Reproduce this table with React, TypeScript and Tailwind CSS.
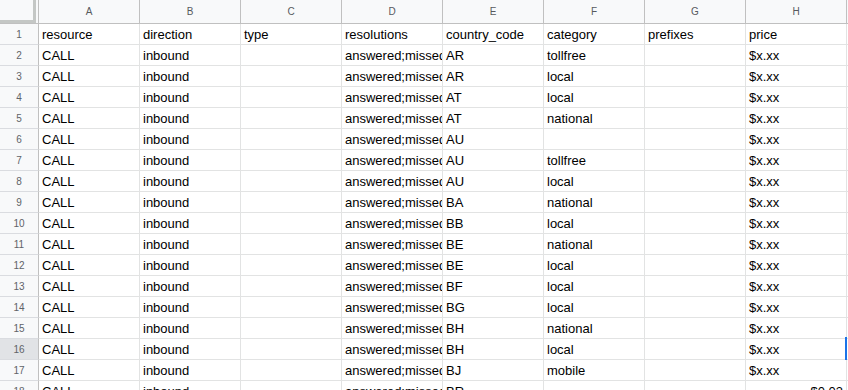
import React from "react";

const COLS = ["A", "B", "C", "D", "E", "F", "G", "H"];

const RES = "answered;missed;voicemail";

const ROWS: string[][] = [
  ["resource", "direction", "type", "resolutions", "country_code", "category", "prefixes", "price"],
  ["CALL", "inbound", "", RES, "AR", "tollfree", "", "$x.xx"],
  ["CALL", "inbound", "", RES, "AR", "local", "", "$x.xx"],
  ["CALL", "inbound", "", RES, "AT", "local", "", "$x.xx"],
  ["CALL", "inbound", "", RES, "AT", "national", "", "$x.xx"],
  ["CALL", "inbound", "", RES, "AU", "", "", "$x.xx"],
  ["CALL", "inbound", "", RES, "AU", "tollfree", "", "$x.xx"],
  ["CALL", "inbound", "", RES, "AU", "local", "", "$x.xx"],
  ["CALL", "inbound", "", RES, "BA", "national", "", "$x.xx"],
  ["CALL", "inbound", "", RES, "BB", "local", "", "$x.xx"],
  ["CALL", "inbound", "", RES, "BE", "national", "", "$x.xx"],
  ["CALL", "inbound", "", RES, "BE", "local", "", "$x.xx"],
  ["CALL", "inbound", "", RES, "BF", "local", "", "$x.xx"],
  ["CALL", "inbound", "", RES, "BG", "local", "", "$x.xx"],
  ["CALL", "inbound", "", RES, "BH", "national", "", "$x.xx"],
  ["CALL", "inbound", "", RES, "BH", "local", "", "$x.xx"],
  ["CALL", "inbound", "", RES, "BJ", "mobile", "", "$x.xx"],
  ["CALL", "inbound", "", RES, "BR", "", "", "$0.03"],
];

const SELECTED_ROW = 16;

function Cell({ value }: { value: string }) {
  // numbers sit on the right, like Sheets does
  const numeric = /^\$\d/.test(value);
  return (
    <div
      className={`w-[101px] h-[21px] shrink-0 border-r border-b border-[#e2e3e3] flex items-end px-[3px] pb-[2px] overflow-hidden whitespace-nowrap text-[13px] leading-[15px] text-black ${
        numeric ? "justify-end" : ""
      }`}
    >
      {value}
    </div>
  );
}

export default function App() {
  return (
    <div
      className="w-[848px] h-[390px] overflow-hidden bg-white"
      style={{ fontFamily: '"Liberation Sans", Arial, sans-serif' }}
    >
      {/* Column headers */}
      <div className="flex h-[24px] bg-[#f8f9fa] border-b border-[#c0c0c0]">
        <div className="w-[39px] h-[23px] shrink-0 border-r border-[#c0c0c0] flex">
          <div className="w-[36px] h-[23px] border-r-[3px] border-b-[3px] border-[#c4c7c5]" />
        </div>
        {COLS.map((c) => (
          <div
            key={c}
            className="w-[101px] h-[23px] shrink-0 border-r border-[#c0c0c0] flex items-center justify-center text-[10px] text-[#575a5e]"
          >
            {c}
          </div>
        ))}
        <div className="w-[101px] h-[23px] shrink-0" />
      </div>

      {/* Rows */}
      {ROWS.map((row, i) => {
        const n = i + 1;
        const selected = n === SELECTED_ROW;
        return (
          <div key={n} className="relative flex h-[21px]">
            <div
              className={`w-[39px] h-[21px] shrink-0 border-r border-b border-r-[#c0c0c0] border-b-[#dadce0] flex items-center justify-center text-[10px] text-[#5f6368] ${
                selected ? "bg-[#e1e3e6]" : "bg-[#f8f9fa]"
              }`}
            >
              {n}
            </div>
            {row.map((v, j) => (
              <Cell key={j} value={v} />
            ))}
            <Cell value="" />
            {selected && (
              <div className="absolute left-[845px] top-[-2px] w-[2px] h-[23px] bg-[#1a73e8]" />
            )}
          </div>
        );
      })}
    </div>
  );
}
